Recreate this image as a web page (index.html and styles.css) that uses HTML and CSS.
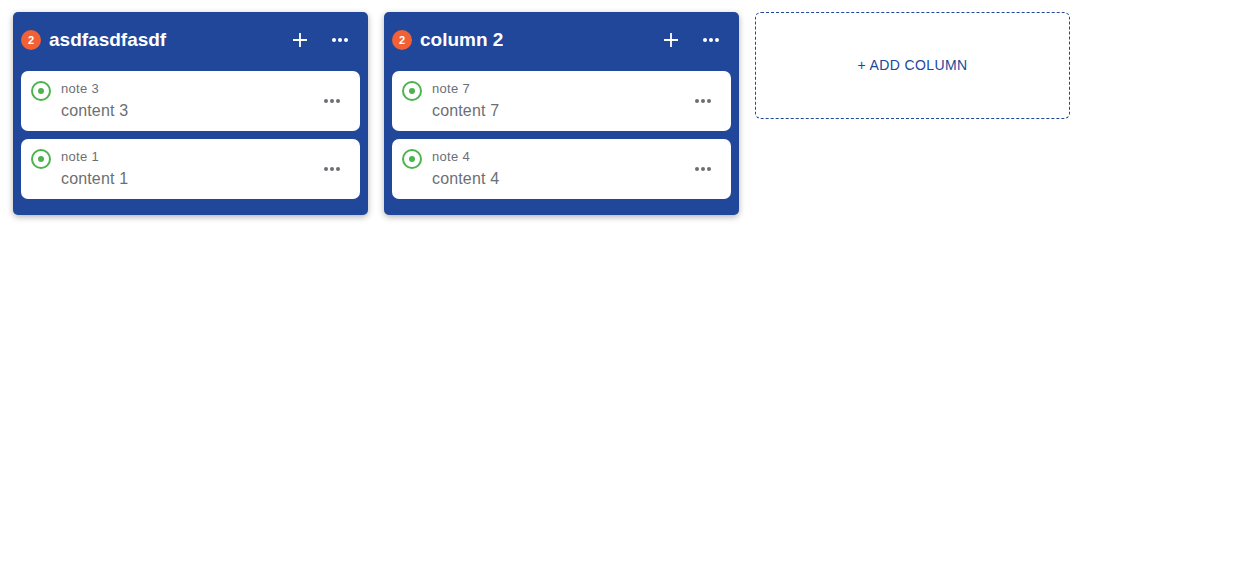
FILE: index.html
```html
<!DOCTYPE html>
<html lang="en">
<head>
<meta charset="utf-8">
<title>Board</title>
<link rel="stylesheet" href="styles.css">
</head>
<body>
<main class="board">
  <section class="column">
    <header class="column-head">
      <span class="badge">2</span>
      <h2 class="column-title">asdfasdfasdf</h2>
      <svg class="plus" viewBox="0 0 14 14"><path d="M7 0V14M0 7H14"/></svg>
      <svg class="dots" viewBox="0 0 16 4"><circle cx="2" cy="2" r="2"/><circle cx="8" cy="2" r="2"/><circle cx="14" cy="2" r="2"/></svg>
    </header>
    <div class="card">
      <svg class="status" viewBox="0 0 20 20"><circle class="ring" cx="10" cy="10" r="9"/><circle class="core" cx="10" cy="10" r="3"/></svg>
      <div class="card-text"><div class="note">note 3</div><div class="content">content 3</div></div>
      <svg class="dots grey" viewBox="0 0 16 4"><circle cx="2" cy="2" r="2"/><circle cx="8" cy="2" r="2"/><circle cx="14" cy="2" r="2"/></svg>
    </div>
    <div class="card">
      <svg class="status" viewBox="0 0 20 20"><circle class="ring" cx="10" cy="10" r="9"/><circle class="core" cx="10" cy="10" r="3"/></svg>
      <div class="card-text"><div class="note">note 1</div><div class="content">content 1</div></div>
      <svg class="dots grey" viewBox="0 0 16 4"><circle cx="2" cy="2" r="2"/><circle cx="8" cy="2" r="2"/><circle cx="14" cy="2" r="2"/></svg>
    </div>
  </section>
  <section class="column">
    <header class="column-head">
      <span class="badge">2</span>
      <h2 class="column-title">column 2</h2>
      <svg class="plus" viewBox="0 0 14 14"><path d="M7 0V14M0 7H14"/></svg>
      <svg class="dots" viewBox="0 0 16 4"><circle cx="2" cy="2" r="2"/><circle cx="8" cy="2" r="2"/><circle cx="14" cy="2" r="2"/></svg>
    </header>
    <div class="card">
      <svg class="status" viewBox="0 0 20 20"><circle class="ring" cx="10" cy="10" r="9"/><circle class="core" cx="10" cy="10" r="3"/></svg>
      <div class="card-text"><div class="note">note 7</div><div class="content">content 7</div></div>
      <svg class="dots grey" viewBox="0 0 16 4"><circle cx="2" cy="2" r="2"/><circle cx="8" cy="2" r="2"/><circle cx="14" cy="2" r="2"/></svg>
    </div>
    <div class="card">
      <svg class="status" viewBox="0 0 20 20"><circle class="ring" cx="10" cy="10" r="9"/><circle class="core" cx="10" cy="10" r="3"/></svg>
      <div class="card-text"><div class="note">note 4</div><div class="content">content 4</div></div>
      <svg class="dots grey" viewBox="0 0 16 4"><circle cx="2" cy="2" r="2"/><circle cx="8" cy="2" r="2"/><circle cx="14" cy="2" r="2"/></svg>
    </div>
  </section>
  <button class="add-column">+ ADD COLUMN</button>
</main>
</body>
</html>
```
FILE: styles.css
```css
html, body { margin: 0; padding: 0; background: #fff; }
body { font-family: "Liberation Sans", Arial, sans-serif; }
.board { display: flex; align-items: flex-start; gap: 16px; padding: 12px 13px; }
.column {
  width: 355px; box-sizing: border-box; padding: 0 8px 16px;
  background: #21479b; border-radius: 5px;
  box-shadow: 0 2px 6px rgba(0,0,0,.3);
}
.column-head { display: flex; align-items: center; height: 56px; padding-bottom: 3px; }
.badge {
  width: 20px; height: 20px; border-radius: 50%; background: #f26035; color: #fff;
  font-size: 11px; font-weight: 700; line-height: 20px; text-align: center; flex: none;
}
.column-title { margin: 0 0 0 8px; flex: 1; font-size: 19px; line-height: 24px; font-weight: 700; color: #fff; }
.plus { width: 14px; height: 14px; fill: none; stroke: #fff; stroke-width: 1.8; margin-right: 25px; }
.dots { width: 16px; height: 4px; fill: #fff; margin-right: 12px; flex: none; }
.dots.grey { fill: #6b6f75; margin-right: 4px; }
.card {
  display: flex; align-items: center; height: 60px; background: #fff; border-radius: 7px;
  padding: 0 16px 0 10px; margin-bottom: 8px;
}
.card:last-child { margin-bottom: 0; }
.status { width: 20px; height: 20px; align-self: flex-start; margin-top: 10px; flex: none; }
.ring { fill: none; stroke: #4cb34f; stroke-width: 2; }
.core { fill: #4cb34f; }
.card-text { flex: 1; margin-left: 10px; }
.note { font-size: 13px; line-height: 16px; letter-spacing: .3px; color: #6b6f75; }
.content { font-size: 16px; line-height: 22px; letter-spacing: .15px; margin-top: 3px; color: #6b6f75; }
.add-column {
  width: 315px; height: 107px; box-sizing: border-box; background: #fff;
  border: 1px dashed #21479b; border-radius: 6px; color: #21479b;
  font: 14px/14px "Liberation Sans", Arial, sans-serif; letter-spacing: .37px; padding: 0 0 2px;
}
```
